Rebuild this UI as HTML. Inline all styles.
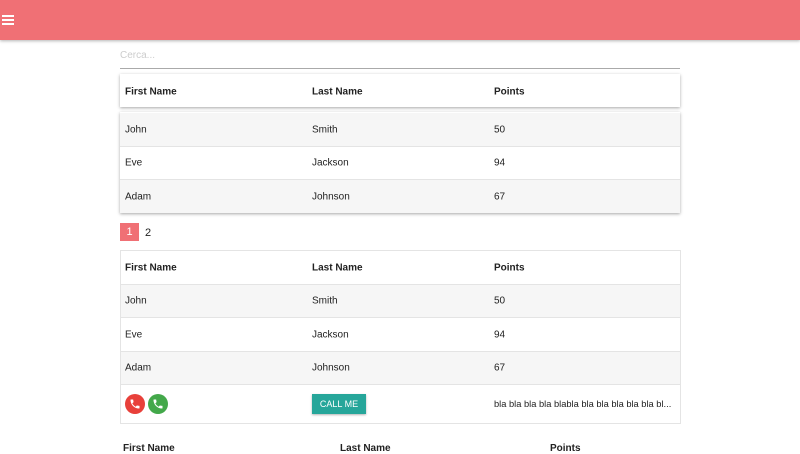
<!DOCTYPE html><html><head><style>
body{margin:0;width:800px;height:450px;overflow:hidden;background:#fff;font-family:"Liberation Sans",sans-serif;font-size:10px;color:#222;position:relative}
.a{position:absolute}
.hd{left:0;top:0;width:800px;height:40px;background:#f07075;box-shadow:0 1px 3px rgba(0,0,0,.3)}
.card{left:120px;width:560px;background:#fff;box-shadow:0 1px 3px rgba(0,0,0,.35)}
.row{position:absolute;left:0;width:100%;border-bottom:1px solid #e4e4e4}
.row span{position:absolute;top:50%;transform:translateY(-50%);white-space:nowrap}
.b{font-weight:bold}
.g{background:#f6f6f6}
.ph{width:20px;height:20px;border-radius:50%}
.ph svg{position:absolute;left:4px;top:4px}
</style></head><body>
<div class="a hd"></div>
<div class="a" style="left:2px;top:15px;width:12px;height:1.5px;background:#fff;box-shadow:0 4px 0 #fff,0 8px 0 #fff"></div>
<div class="a" style="left:120px;top:50px;color:#ccc">Cerca...</div>
<div class="a" style="left:120px;top:68px;width:560px;height:1px;background:#aaa"></div>
<div class="a card" style="top:74px;height:33px"><div class="row b" style="top:1px;height:33px;border:0"><span style="left:5px">First Name</span><span style="left:192px">Last Name</span><span style="left:374px">Points</span></div></div>
<div class="a card" style="top:112px;height:101px">
<div class="row g" style="top:1px;height:33px"><span style="left:5px">John</span><span style="left:192px">Smith</span><span style="left:374px">50</span></div>
<div class="row" style="top:34px;height:33px"><span style="left:5px">Eve</span><span style="left:192px">Jackson</span><span style="left:374px">94</span></div>
<div class="row g" style="top:68px;height:33px;border:0"><span style="left:5px">Adam</span><span style="left:192px">Johnson</span><span style="left:374px">67</span></div>
</div>
<div class="a" style="left:120px;top:223px;width:19px;height:18px;background:#f07075;color:#fff;text-align:center;line-height:18px;font-size:11px">1</div>
<div class="a" style="left:145px;top:224px;width:6px;height:18px;line-height:18px;font-size:11px">2</div>
<div class="a" style="left:120px;top:250px;width:559px;height:172px;border:1px solid #e4e4e4">
<div class="row b" style="top:0;height:33px"><span style="left:4px">First Name</span><span style="left:191px">Last Name</span><span style="left:373px">Points</span></div>
<div class="row g" style="top:34px;height:32px"><span style="left:4px">John</span><span style="left:191px">Smith</span><span style="left:373px">50</span></div>
<div class="row" style="top:67px;height:33px"><span style="left:4px">Eve</span><span style="left:191px">Jackson</span><span style="left:373px">94</span></div>
<div class="row g" style="top:101px;height:32px"><span style="left:4px">Adam</span><span style="left:191px">Johnson</span><span style="left:373px">67</span></div>
<div class="row" style="top:134px;height:38px;border:0">
<span class="ph" style="left:4px;background:#e8403a"><svg width="12" height="12" viewBox="0 0 24 24"><path fill="#fff" d="M6.6 10.8c1.4 2.8 3.8 5.1 6.6 6.6l2.2-2.2c.3-.3.7-.4 1-.2 1.1.4 2.300.6 3.6.6.6 0 1 .4 1 1V20c0 .6-.4 1-1 1C10.6 21 3 13.4 3 4c0-.6.4-1 1-1h3.5c.6 0 1 .4 1 1 0 1.3.2 2.5.6 3.6.1.3 0 .7-.2 1z"/></svg></span>
<span class="ph" style="left:27px;background:#43a84a"><svg width="12" height="12" viewBox="0 0 24 24"><path fill="#fff" d="M6.6 10.8c1.4 2.8 3.8 5.1 6.6 6.6l2.2-2.2c.3-.3.7-.4 1-.2 1.1.4 2.3.6 3.6.6.6 0 1 .4 1 1V20c0 .6-.4 1-1 1C10.6 21 3 13.4 3 4c0-.6.4-1 1-1h3.5c.6 0 1 .4 1 1 0 1.3.2 2.5.6 3.6.1.3 0 .7-.2 1z"/></svg></span>
<span style="left:191px;width:54px;height:20px;background:#26a69a;color:#fff;text-align:center;line-height:20px;font-size:9px;box-shadow:0 1px 2px rgba(0,0,0,.3)">CALL ME</span>
<span style="left:373px;font-size:9.3px">bla bla bla bla blabla bla bla bla bla bla bl...</span>
</div></div>
<div class="a b" style="left:123px;top:443px">First Name</div>
<div class="a b" style="left:340px;top:443px">Last Name</div>
<div class="a b" style="left:550px;top:443px">Points</div>
</body></html>
